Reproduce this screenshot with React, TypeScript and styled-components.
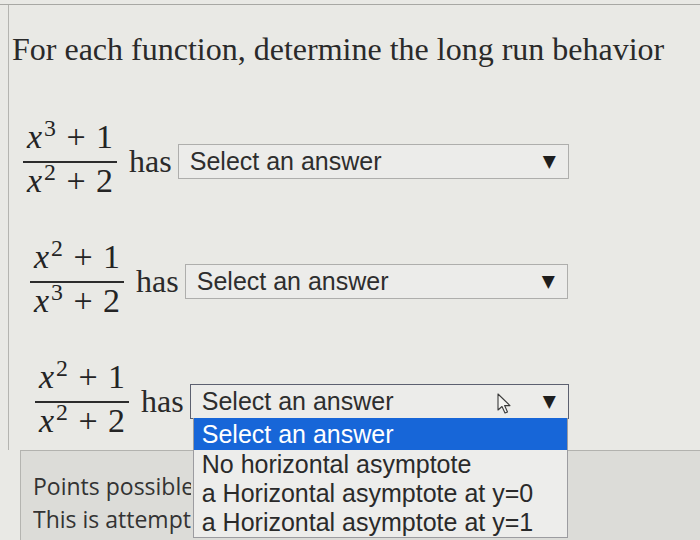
import React from 'react';
import styled, { createGlobalStyle } from 'styled-components';

const GlobalStyle = createGlobalStyle`
  html, body {
    margin: 0;
    padding: 0;
    background: #e9e9e5;
  }
  body {
    width: 700px;
    height: 540px;
    overflow: hidden;
  }
`;

const Page = styled.div`
  height: 540px;
  padding-top: 4px;
  box-sizing: border-box;
`;

const Panel = styled.div`
  height: 100%;
  box-sizing: border-box;
  border-top: 1px solid #a8a8a4;
  display: flex;
  flex-direction: column;
`;

const Questions = styled.div`
  flex: 1;
  margin-left: 8px;
  border-left: 1px solid #b4b4b0;
  display: flex;
  flex-direction: column;
`;

const Heading = styled.h1`
  margin: 0;
  padding: 24px 0 0 3px;
  font-family: 'Liberation Serif', 'Times New Roman', serif;
  font-weight: normal;
  font-size: 32px;
  line-height: 40px;
  color: #2a2a2a;
`;

const Rows = styled.div`
  display: flex;
  flex-direction: column;
  gap: 36px;
  padding: 50px 0 0 14px;
`;

const Row = styled.div<{ shift: number }>`
  display: flex;
  align-items: center;
  height: 84px;
  padding-left: ${p => p.shift}px;
`;

const Fraction = styled.span`
  display: inline-flex;
  flex-direction: column;
  align-items: center;
  padding-bottom: 4px;
  font-family: 'Liberation Serif', 'Times New Roman', serif;
  font-size: 34px;
  color: #242424;
`;

const Num = styled.span`
  line-height: 36px;
  padding: 0 4px 6px;
  white-space: nowrap;
`;

const Bar = styled.span`
  align-self: stretch;
  height: 2px;
  background: #2c2c2c;
`;

const Den = styled.span`
  line-height: 36px;
  padding: 0 4px;
  white-space: nowrap;
`;

const Var = styled.i`
  font-style: italic;
`;

const Sup = styled.sup`
  font-size: 0.7em;
  line-height: 0;
  vertical-align: 0;
  position: relative;
  top: -0.5em;
  margin-left: 2px;
`;

const Op = styled.span`
  display: inline-block;
  width: 0.78em;
  margin: 0 0.2em;
  text-align: center;
`;

const Has = styled.span`
  font-family: 'Liberation Serif', 'Times New Roman', serif;
  font-size: 32px;
  color: #2a2a2a;
  margin: 0 6px 0 12px;
`;

const SelectWrap = styled.div`
  position: relative;
`;

const SelectBox = styled.div<{ open?: boolean; w: number }>`
  box-sizing: border-box;
  width: ${p => p.w}px;
  height: 35px;
  display: flex;
  align-items: center;
  justify-content: space-between;
  padding: 0 12px 0 11px;
  border: 1px solid ${p => (p.open ? '#5c6070' : '#aeaeac')};
  background: #ececea;
  font-family: 'Liberation Sans', Arial, sans-serif;
  font-size: 25px;
  color: #2e2e2e;
`;

const Arrow = styled.span`
  font-family: 'DejaVu Sans', sans-serif;
  font-size: 17px;
  color: #1e1e1e;
`;

const List = styled.ul`
  position: absolute;
  top: 34px;
  left: 3px;
  right: 1px;
  margin: 0;
  padding: 0;
  list-style: none;
  background: #ededeb;
  border: 1px solid #9c9ca0;
  border-top: none;
  z-index: 2;
  font-family: 'Liberation Sans', Arial, sans-serif;
  font-size: 25px;
`;

const Option = styled.li<{ active?: boolean }>`
  height: ${p => (p.active ? 32 : 29)}px;
  line-height: ${p => (p.active ? 32 : 29)}px;
  padding-left: 8px;
  white-space: nowrap;
  background: ${p => (p.active ? '#1766d8' : 'transparent')};
  color: ${p => (p.active ? '#ffffff' : '#2a2a2a')};
`;

const Cursor = styled.svg`
  position: absolute;
  top: 9px;
  left: 307px;
  z-index: 3;
`;

const Footer = styled.div`
  height: 90px;
  box-sizing: border-box;
  margin-left: 20px;
  border-top: 1px solid #b2b2ae;
  border-left: 1px solid #b4b4b0;
  background: #dcdcd8;
  padding: 19px 0 0 12px;
  font-family: 'Open Sans', 'Noto Sans', sans-serif;
  font-size: 23px;
  line-height: 33px;
  color: #333;
`;

const FooterLine = styled.div`
  width: 158px;
  overflow: hidden;
  white-space: nowrap;
`;

const options = [
  'Select an answer',
  'No horizontal asymptote',
  'a Horizontal asymptote at y=0',
  'a Horizontal asymptote at y=1',
];

type Term = { top: [number, number]; bottom: [number, number] };

const rows: { f: Term; shift: number; w: number; open?: boolean }[] = [
  { f: { top: [3, 1], bottom: [2, 2] }, shift: 0, w: 391 },
  { f: { top: [2, 1], bottom: [3, 2] }, shift: 7, w: 383 },
  { f: { top: [2, 1], bottom: [2, 2] }, shift: 12, w: 379, open: true },
];

const Poly = ({ t }: { t: [number, number] }) => (
  <>
    <Var>x</Var>
    <Sup>{t[0]}</Sup>
    <Op>+</Op>
    {t[1]}
  </>
);

export default function App() {
  return (
    <>
      <GlobalStyle />
      <Page>
        <Panel>
          <Questions>
            <Heading>For each function, determine the long run behavior</Heading>
            <Rows>
              {rows.map((r, i) => (
                <Row key={i} shift={r.shift}>
                  <Fraction>
                    <Num>
                      <Poly t={r.f.top} />
                    </Num>
                    <Bar />
                    <Den>
                      <Poly t={r.f.bottom} />
                    </Den>
                  </Fraction>
                  <Has>has</Has>
                  <SelectWrap>
                    <SelectBox open={r.open} w={r.w}>
                      <span>Select an answer</span>
                      <Arrow>▼</Arrow>
                    </SelectBox>
                    {r.open && (
                      <>
                        <Cursor width="16" height="22" viewBox="0 0 16 22">
                          <path
                            d="M1 1 L1 17 L5 13.5 L8 20 L10.5 19 L7.6 12.6 L13 12.6 Z"
                            fill="#f4f4f2"
                            stroke="#3a3a3a"
                            strokeWidth="1.1"
                            strokeLinejoin="round"
                          />
                        </Cursor>
                        <List>
                          {options.map((o, j) => (
                            <Option key={o} active={j === 0}>
                              {o}
                            </Option>
                          ))}
                        </List>
                      </>
                    )}
                  </SelectWrap>
                </Row>
              ))}
            </Rows>
          </Questions>
          <Footer>
            <FooterLine>Points possible: 1</FooterLine>
            <FooterLine>This is attempt 1 of 1.</FooterLine>
          </Footer>
        </Panel>
      </Page>
    </>
  );
}
